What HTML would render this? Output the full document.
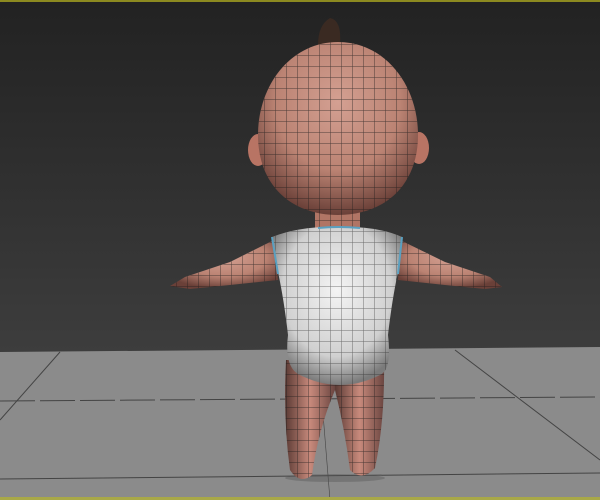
<!DOCTYPE html>
<html><head><style>
html,body{margin:0;padding:0;width:600px;height:500px;overflow:hidden;background:#2d2d2d}
</style></head><body>
<svg width="600" height="500" viewBox="0 0 600 500" xmlns="http://www.w3.org/2000/svg">
<defs>
<linearGradient id="bg" x1="0" y1="0" x2="0" y2="1">
<stop offset="0" stop-color="#222"/><stop offset="1" stop-color="#3d3d3d"/>
</linearGradient>
<radialGradient id="skin" cx="0.5" cy="0.35" r="0.65">
<stop offset="0" stop-color="#d4a092"/><stop offset="0.6" stop-color="#bb8373"/><stop offset="1" stop-color="#6a4038"/>
</radialGradient>
<linearGradient id="leg" x1="0" y1="0" x2="1" y2="0">
<stop offset="0" stop-color="#5a3a34"/><stop offset="0.5" stop-color="#c88a7c"/><stop offset="1" stop-color="#6a4540"/>
</linearGradient>
<radialGradient id="shirt" cx="0.5" cy="0.4" r="0.6">
<stop offset="0" stop-color="#f4f4f4"/><stop offset="0.7" stop-color="#d0d0d0"/><stop offset="1" stop-color="#7a7a7a"/>
</radialGradient>
<pattern id="grid" width="11" height="11" patternUnits="userSpaceOnUse">
<path d="M0 0H11M0 0V11" stroke="#1a1a1a" stroke-width="1" fill="none" opacity="0.7"/>
</pattern>
</defs>
<rect width="600" height="352" fill="url(#bg)"/>
<rect y="0" width="600" height="2" fill="#8c8a20"/>
<polygon points="0,352 600,347 600,500 0,500" fill="#8b8b8b"/>
<g stroke="#444" stroke-width="1" fill="none">
<line x1="0" y1="401" x2="600" y2="397" stroke-dasharray="35 5"/>
<line x1="0" y1="479" x2="600" y2="473"/>
<line x1="60" y1="352" x2="0" y2="420"/>
<line x1="455" y1="350" x2="600" y2="460"/>
<line x1="318" y1="352" x2="330" y2="500" stroke-width="0.6"/>
</g>
<rect y="497" width="600" height="3" fill="#a8a848"/>
<ellipse cx="335" cy="478" rx="50" ry="4" fill="#555" opacity="0.4"/>
<g>
<path d="M286 360 Q283 420 290 470 Q300 485 312 475 Q318 430 335 390 L335 360Z" fill="url(#leg)"/>
<path d="M335 360 L335 390 Q345 430 350 470 Q362 482 375 468 Q385 420 384 360Z" fill="url(#leg)"/>
<path d="M286 360 Q283 420 290 470 Q300 485 312 475 Q318 430 335 390 L335 360Z M335 360 L335 390 Q345 430 350 470 Q362 482 375 468 Q385 420 384 360Z" fill="url(#grid)"/>
</g>
<path d="M274 240 L230 262 L185 277 L170 286 L190 289 L230 285 L278 280Z" fill="url(#skin)"/>
<path d="M400 240 L445 262 L490 277 L502 287 L485 289 L445 285 L398 280Z" fill="url(#skin)"/>
<path d="M274 240 L230 262 L185 277 L170 286 L190 289 L230 285 L278 280Z M400 240 L445 262 L490 277 L502 287 L485 289 L445 285 L398 280Z" fill="url(#grid)"/>
<rect x="315" y="200" width="45" height="32" fill="#b07565"/>
<rect x="315" y="200" width="45" height="32" fill="url(#grid)"/>
<path d="M272 237 Q300 226 338 227 Q378 226 402 237 L398 272 Q392 300 388 335 Q392 370 380 375 Q360 385 340 385 Q320 385 300 375 Q284 368 288 335 Q284 300 278 272Z" fill="url(#shirt)"/>
<path d="M272 237 Q300 226 338 227 Q378 226 402 237 L398 272 Q392 300 388 335 Q392 370 380 375 Q360 385 340 385 Q320 385 300 375 Q284 368 288 335 Q284 300 278 272Z" fill="url(#grid)" opacity="0.8"/>
<path d="M272 237 L278 274 M402 237 L398 274 M318 228 Q338 226 360 228" stroke="#5aa0c0" stroke-width="2" fill="none"/>
<path d="M318 45 Q318 25 330 18 Q342 20 340 45Z" fill="#3a2a22"/>
<ellipse cx="258" cy="150" rx="10" ry="16" fill="#b87464"/>
<ellipse cx="419" cy="148" rx="10" ry="16" fill="#b87464"/>
<path d="M338 42 C385 42 418 85 418 135 C418 185 385 215 338 215 C291 215 258 185 258 135 C258 85 291 42 338 42Z" fill="url(#skin)"/>
<path d="M338 42 C385 42 418 85 418 135 C418 185 385 215 338 215 C291 215 258 185 258 135 C258 85 291 42 338 42Z" fill="url(#grid)"/>
</svg>
</body></html>
